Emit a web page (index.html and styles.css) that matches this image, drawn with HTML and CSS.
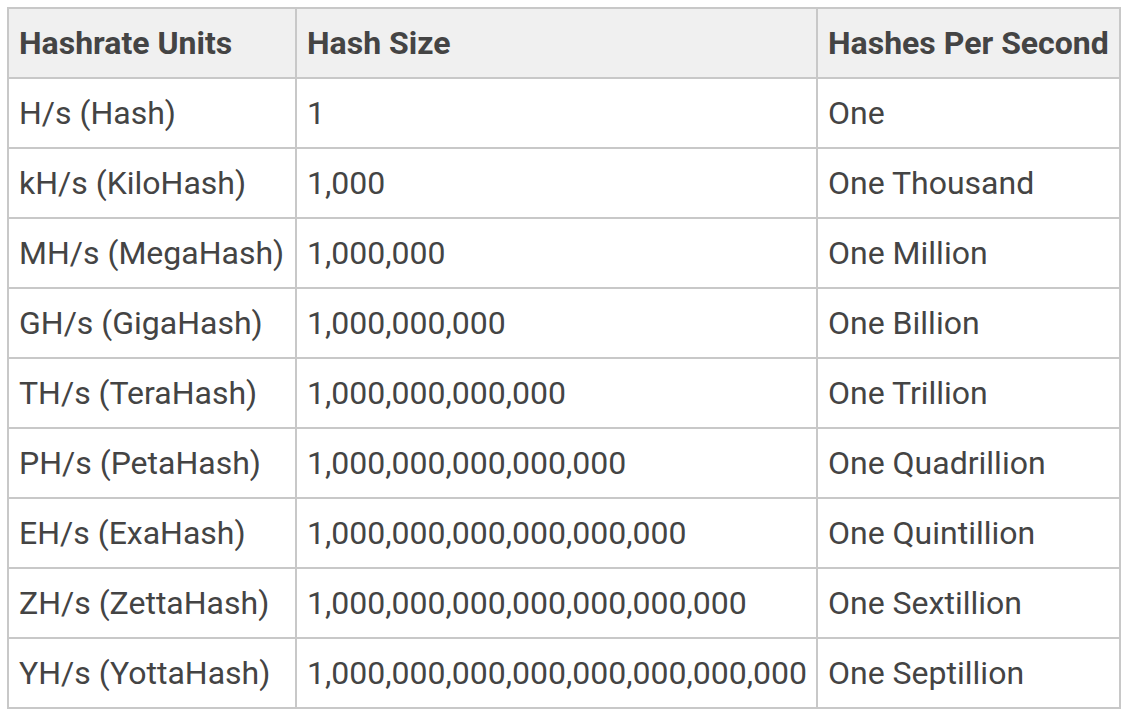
FILE: index.html
```html
<!DOCTYPE html>
<html>
<head>
<meta charset="utf-8">
<link rel="stylesheet" href="styles.css">
</head>
<body>
<table class="hash-table">
  <colgroup>
    <col class="col-unit">
    <col class="col-size">
    <col class="col-per">
  </colgroup>
  <thead>
    <tr><th>Hashrate Units</th><th>Hash Size</th><th>Hashes Per Second</th></tr>
  </thead>
  <tbody>
    <tr><td>H/s (Hash)</td><td>1</td><td>One</td></tr>
    <tr><td>kH/s (KiloHash)</td><td>1,000</td><td>One Thousand</td></tr>
    <tr><td>MH/s (MegaHash)</td><td>1,000,000</td><td>One Million</td></tr>
    <tr><td>GH/s (GigaHash)</td><td>1,000,000,000</td><td>One Billion</td></tr>
    <tr><td>TH/s (TeraHash)</td><td>1,000,000,000,000</td><td>One Trillion</td></tr>
    <tr><td>PH/s (PetaHash)</td><td>1,000,000,000,000,000</td><td>One Quadrillion</td></tr>
    <tr><td>EH/s (ExaHash)</td><td>1,000,000,000,000,000,000</td><td>One Quintillion</td></tr>
    <tr><td>ZH/s (ZettaHash)</td><td>1,000,000,000,000,000,000,000</td><td>One Sextillion</td></tr>
    <tr><td>YH/s (YottaHash)</td><td>1,000,000,000,000,000,000,000,000</td><td>One Septillion</td></tr>
  </tbody>
</table>
</body>
</html>
```

FILE: styles.css
```css
html, body {
  margin: 0;
  padding: 0;
  background: #ffffff;
}

body {
  padding: 7px;
  font-family: Roboto, "Liberation Sans", sans-serif;
  color: #444444;
}

.hash-table {
  border-collapse: collapse;
  table-layout: fixed;
  width: 1112px;
  font-size: 32px;
}

.col-unit { width: 288px; }
.col-size { width: 521px; }
.col-per { width: 303px; }

.hash-table th,
.hash-table td {
  border: 2px solid #c8c8c8;
  height: 68px;
  padding: 0 10px;
  text-align: left;
  vertical-align: middle;
  white-space: nowrap;
  line-height: 1;
}

.hash-table th {
  background: #f0f0f0;
  font-weight: 700;
}

.hash-table td {
  font-weight: 400;
}
```
